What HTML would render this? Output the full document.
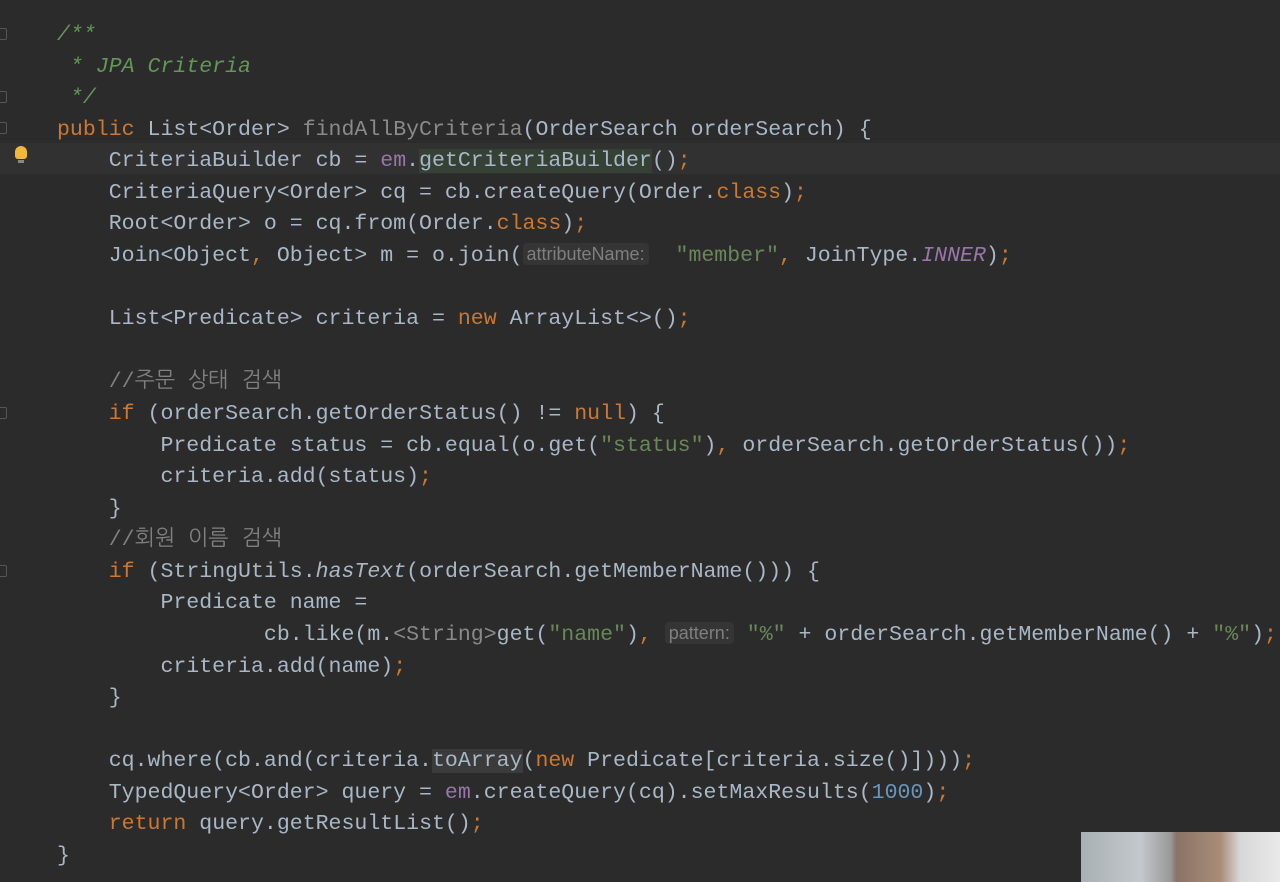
<!DOCTYPE html>
<html><head><meta charset="utf-8"><style>
html,body{margin:0;padding:0;width:1280px;height:882px;overflow:hidden;background:#2b2b2b}
.cur{position:absolute;left:0;top:143px;width:1280px;height:31px;background:#313131}
pre{position:absolute;left:57px;top:20px;margin:0;font-family:"Liberation Mono","NanumGothic","Noto Sans CJK KR",monospace;font-size:21.55px;line-height:31.58px;color:#a9b7c6;white-space:pre}
.k{color:#cc7832}.c{color:#629755;font-style:italic}.lc{color:#808080}.s{color:#6a8759}.p{color:#9876aa}.pi{color:#9876aa;font-style:italic}.g{color:#8a8a8a}.n{color:#6897bb}.i{font-style:italic}
.hl{background:#344134}.hl2{background:#3b3b3b}
.h{display:inline-block;font-family:"Liberation Sans",sans-serif;font-size:18px;color:#7f7f7f;line-height:26px;vertical-align:1px}
.h span{background:#353535;border-radius:4px;padding:1px 4px}
.bulb{position:absolute;left:15px;top:146px;width:12px;height:13px;background:#f4b73d;border-radius:6px 6px 3px 3px}
.bulb:after{content:"";position:absolute;left:3px;top:14px;width:6px;height:3px;background:#888}
.gut{position:absolute;left:-4px;width:9px;height:10px;border:1px solid #555;border-radius:2px}
.vid{position:absolute;left:1081px;top:832px;width:199px;height:50px;background:linear-gradient(90deg,#a9b0b4 0%,#c3c8cc 30%,#999 45%,#8a7466 48%,#a88c78 70%,#d8d8d8 80%,#e9e9e9 100%)}
</style></head><body>
<div class="cur"></div>
<div class="bulb"></div>
<div class="gut" style="top:28px"></div><div class="gut" style="top:91px"></div><div class="gut" style="top:122px"></div><div class="gut" style="top:407px"></div><div class="gut" style="top:565px"></div>
<pre><span class="c">/**</span>
<span class="c"> * JPA Criteria</span>
<span class="c"> */</span>
<span class="k">public</span> List&lt;Order&gt; <span class="g">findAllByCriteria</span>(OrderSearch orderSearch) {
    CriteriaBuilder cb = <span class="p">em</span>.<span class="hl">getCriteriaBuilder</span>()<span class="k">;</span>
    CriteriaQuery&lt;Order&gt; cq = cb.createQuery(Order.<span class="k">class</span>)<span class="k">;</span>
    Root&lt;Order&gt; o = cq.from(Order.<span class="k">class</span>)<span class="k">;</span>
    Join&lt;Object<span class="k">,</span> Object&gt; m = o.join(<span class="h" style="width:153px"><span>attributeName:</span></span><span class="s">"member"</span><span class="k">,</span> JoinType.<span class="pi">INNER</span>)<span class="k">;</span>

    List&lt;Predicate&gt; criteria = <span class="k">new</span> ArrayList&lt;&gt;()<span class="k">;</span>

    <span class="lc">//주문 상태 검색</span>
    <span class="k">if</span> (orderSearch.getOrderStatus() != <span class="k">null</span>) {
        Predicate status = cb.equal(o.get(<span class="s">"status"</span>)<span class="k">,</span> orderSearch.getOrderStatus())<span class="k">;</span>
        criteria.add(status)<span class="k">;</span>
    }
    <span class="lc">//회원 이름 검색</span>
    <span class="k">if</span> (StringUtils.<span class="i">hasText</span>(orderSearch.getMemberName())) {
        Predicate name =
                cb.like(m.<span class="g">&lt;String&gt;</span>get(<span class="s">"name"</span>)<span class="k">,</span> <span class="h" style="width:82px"><span>pattern:</span></span><span class="s">"%"</span> + orderSearch.getMemberName() + <span class="s">"%"</span>)<span class="k">;</span>
        criteria.add(name)<span class="k">;</span>
    }

    cq.where(cb.and(criteria.<span class="hl2">toArray</span>(<span class="k">new</span> Predicate[criteria.size()])))<span class="k">;</span>
    TypedQuery&lt;Order&gt; query = <span class="p">em</span>.createQuery(cq).setMaxResults(<span class="n">1000</span>)<span class="k">;</span>
    <span class="k">return</span> query.getResultList()<span class="k">;</span>
}</pre>
<div class="vid"></div>
</body></html>
